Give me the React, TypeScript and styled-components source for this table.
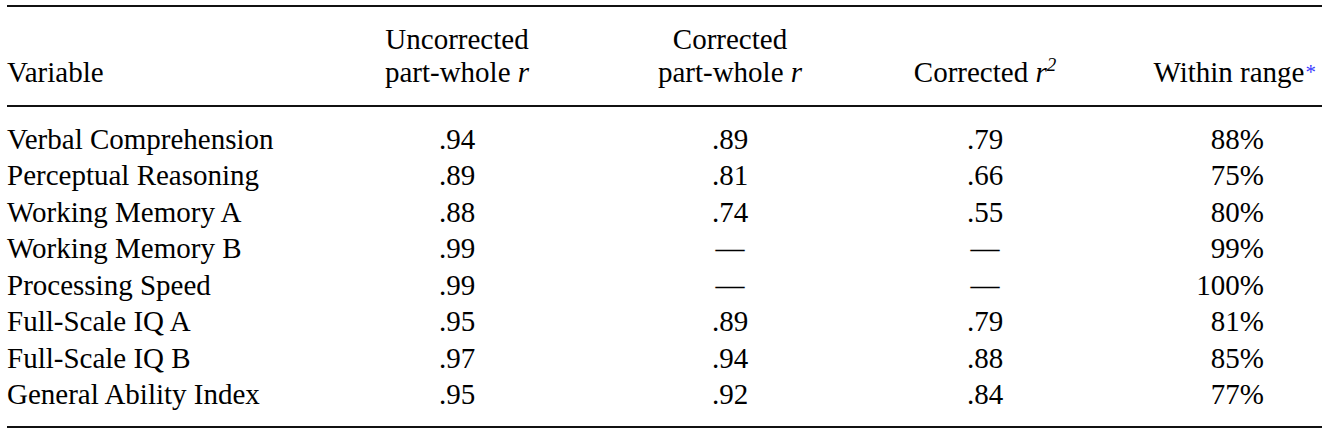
import React from 'react';
import styled, { createGlobalStyle } from 'styled-components';

const GlobalStyle = createGlobalStyle`
  html, body { margin: 0; padding: 0; background: #ffffff; }
  body { font-family: "Liberation Serif", "Times New Roman", serif; color: #000000; }
`;

const Page = styled.div`
  padding: 5px 7px 0 7px;
`;

const Table = styled.table`
  width: 1315px;
  border-collapse: separate;
  border-spacing: 0;
  table-layout: fixed;
  font-size: 29px;
`;

const Col = styled.col<{ $w: number }>`
  width: ${(p) => p.$w}px;
`;

type Align = 'left' | 'center' | 'right';

const HeadCell = styled.th<{ $align: Align; $pr?: number }>`
  font-weight: normal;
  text-align: ${(p) => p.$align};
  vertical-align: bottom;
  line-height: 33px;
  padding: 15.5px ${(p) => p.$pr ?? 0}px 16.5px 0;
  border-top: 2px solid #111;
  border-bottom: 2px solid #111;
  white-space: nowrap;
`;

const Cell = styled.td<{ $align: Align; $pr?: number }>`
  text-align: ${(p) => p.$align};
  line-height: 36.5px;
  padding: 0 ${(p) => p.$pr ?? 0}px 0 0;
  white-space: nowrap;

  tr:first-child > & {
    padding-top: 13.5px;
  }
  tr:last-child > & {
    padding-bottom: 13.5px;
    border-bottom: 2px solid #111;
  }
`;

const Ital = styled.span`
  font-style: italic;
`;

const Sup = styled.sup`
  font-size: 19px;
  line-height: 0;
  vertical-align: 11px;
`;

const Note = styled.span`
  font-size: 21px;
  line-height: 0;
  vertical-align: 3px;
  margin-left: 1px;
  color: #3b3bff;
`;

type Row = { name: string; a: string; b: string; c: string; d: string };

const rows: Row[] = [
  { name: 'Verbal Comprehension', a: '.94', b: '.89', c: '.79', d: '88%' },
  { name: 'Perceptual Reasoning', a: '.89', b: '.81', c: '.66', d: '75%' },
  { name: 'Working Memory A', a: '.88', b: '.74', c: '.55', d: '80%' },
  { name: 'Working Memory B', a: '.99', b: '—', c: '—', d: '99%' },
  { name: 'Processing Speed', a: '.99', b: '—', c: '—', d: '100%' },
  { name: 'Full-Scale IQ A', a: '.95', b: '.89', c: '.79', d: '81%' },
  { name: 'Full-Scale IQ B', a: '.97', b: '.94', c: '.88', d: '85%' },
  { name: 'General Ability Index', a: '.95', b: '.92', c: '.84', d: '77%' },
];

export default function App() {
  return (
    <Page>
      <GlobalStyle />
      <Table>
        <colgroup>
          <Col $w={293} />
          <Col $w={314} />
          <Col $w={232} />
          <Col $w={278} />
          <Col $w={198} />
        </colgroup>
        <thead>
          <tr>
            <HeadCell $align="left">Variable</HeadCell>
            <HeadCell $align="center">
              Uncorrected
              <br />
              part-whole <Ital>r</Ital>
            </HeadCell>
            <HeadCell $align="center">
              Corrected
              <br />
              part-whole <Ital>r</Ital>
            </HeadCell>
            <HeadCell $align="center">
              Corrected <Ital>r</Ital>
              <Sup>
                <Ital>2</Ital>
              </Sup>
            </HeadCell>
            <HeadCell $align="right" $pr={6}>
              Within range<Note>*</Note>
            </HeadCell>
          </tr>
        </thead>
        <tbody>
          {rows.map((r) => (
            <tr key={r.name}>
              <Cell $align="left">{r.name}</Cell>
              <Cell $align="center">{r.a}</Cell>
              <Cell $align="center">{r.b}</Cell>
              <Cell $align="center">{r.c}</Cell>
              <Cell $align="right" $pr={58}>
                {r.d}
              </Cell>
            </tr>
          ))}
        </tbody>
      </Table>
    </Page>
  );
}
